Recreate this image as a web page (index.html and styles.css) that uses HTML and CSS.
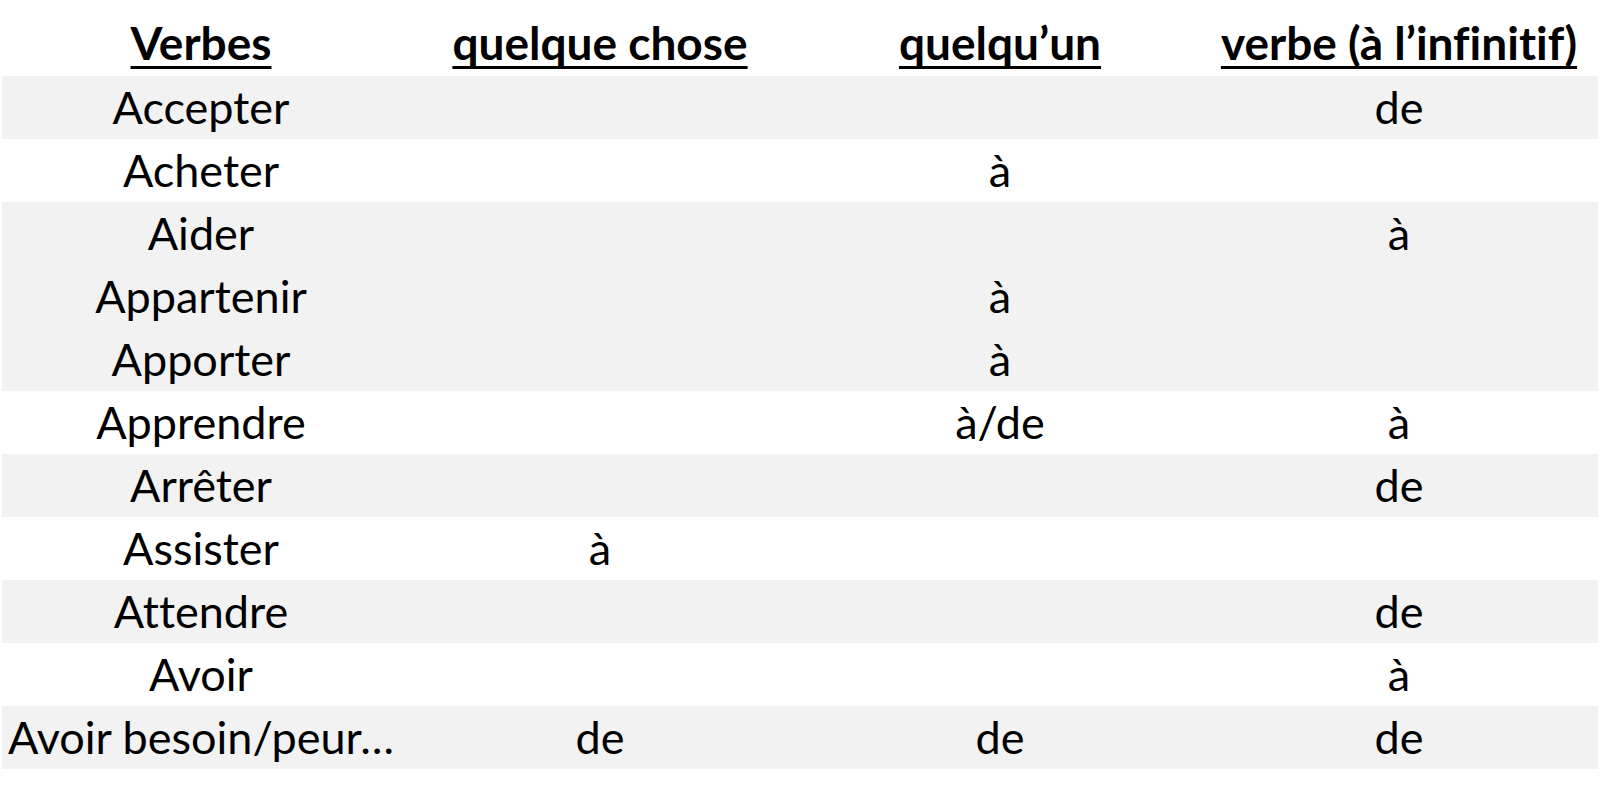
FILE: index.html
```html
<!DOCTYPE html>
<html lang="fr">
<head>
<meta charset="utf-8">
<link rel="stylesheet" href="styles.css">
</head>
<body>
<div class="table">
  <div class="row head">
    <div class="cell"><span>Verbes</span></div>
    <div class="cell"><span>quelque chose</span></div>
    <div class="cell"><span>quelqu’un</span></div>
    <div class="cell"><span>verbe (à l’infinitif)</span></div>
  </div>
  <div class="row gray"><div class="cell">Accepter</div><div class="cell"></div><div class="cell"></div><div class="cell">de</div></div>
  <div class="row"><div class="cell">Acheter</div><div class="cell"></div><div class="cell">à</div><div class="cell"></div></div>
  <div class="row gray"><div class="cell">Aider</div><div class="cell"></div><div class="cell"></div><div class="cell">à</div></div>
  <div class="row gray"><div class="cell">Appartenir</div><div class="cell"></div><div class="cell">à</div><div class="cell"></div></div>
  <div class="row gray"><div class="cell">Apporter</div><div class="cell"></div><div class="cell">à</div><div class="cell"></div></div>
  <div class="row"><div class="cell">Apprendre</div><div class="cell"></div><div class="cell">à/de</div><div class="cell">à</div></div>
  <div class="row gray"><div class="cell">Arrêter</div><div class="cell"></div><div class="cell"></div><div class="cell">de</div></div>
  <div class="row"><div class="cell">Assister</div><div class="cell">à</div><div class="cell"></div><div class="cell"></div></div>
  <div class="row gray"><div class="cell">Attendre</div><div class="cell"></div><div class="cell"></div><div class="cell">de</div></div>
  <div class="row"><div class="cell">Avoir</div><div class="cell"></div><div class="cell"></div><div class="cell">à</div></div>
  <div class="row gray"><div class="cell">Avoir besoin/peur…</div><div class="cell">de</div><div class="cell">de</div><div class="cell">de</div></div>
</div>
</body>
</html>
```

FILE: styles.css
```css
html, body {
  margin: 0;
  padding: 0;
  background: #ffffff;
}
body {
  width: 1600px;
  height: 798px;
  overflow: hidden;
  font-family: "Lato", "Open Sans", sans-serif;
  font-variant-ligatures: none;
  color: #000;
}
.table {
  display: flex;
  flex-direction: column;
  padding: 0 2px;
}
.row {
  display: grid;
  grid-template-columns: 398px 400px 400px 398px;
  height: 63px;
  align-items: center;
}
.row.gray {
  background: #f2f2f2;
}
.row.head {
  height: 76px;
  align-items: end;
}
.cell {
  text-align: center;
  font-size: 45px;
  line-height: 63px;
  white-space: nowrap;
}
.head .cell {
  font-size: 46px;
  font-weight: bold;
  line-height: 52px;
  padding-bottom: 7px;
}
.head .cell span {
  text-decoration: underline;
  text-decoration-thickness: 3px;
  text-underline-offset: 6px;
  text-decoration-skip-ink: none;
}
```
